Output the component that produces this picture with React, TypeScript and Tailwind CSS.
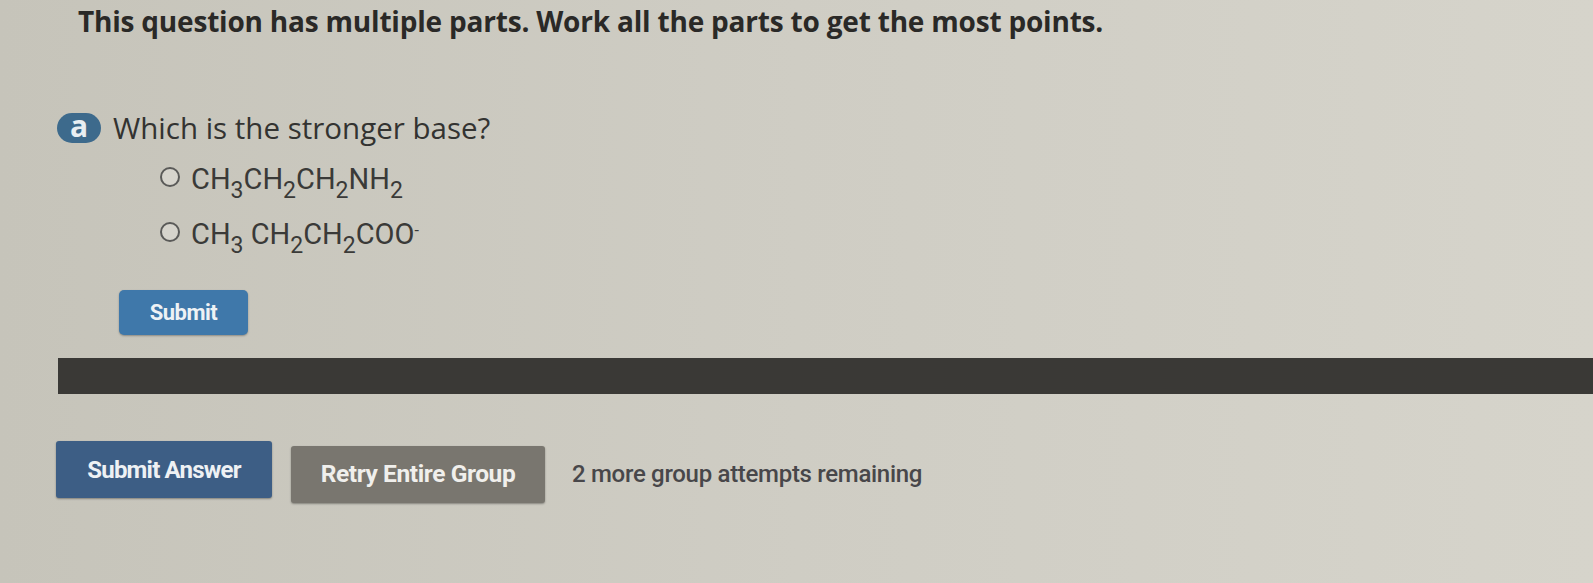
import React from "react";

function Radio() {
  return (
    <span className="inline-block w-[20px] h-[20px] rounded-full border-2 border-[#5a5a58] bg-[#d6d4cc] mr-[11px] shrink-0" />
  );
}

function S({ c }: { c: string }) {
  return <sub className="text-[23px] -bottom-[0.38em]">{c}</sub>;
}

export default function App() {
  return (
    <div className="w-[1593px] h-[583px] overflow-hidden bg-gradient-to-r from-[#c6c4ba] via-[#cfcdc4] to-[#d6d4cb] relative">
      <div className="pl-[78px] pt-[2px] h-[40px]">
        <h1 className="font-['Open_Sans',sans-serif] font-bold text-[28px] leading-[38px] text-[#2a2927] tracking-[-0.2px] whitespace-nowrap">
          This question has multiple parts. Work all the parts to get the most points.
        </h1>
      </div>

      <div className="pl-[57px] pt-[71px] flex items-center">
        <span className="w-[44px] h-[30px] rounded-full bg-[#3d6a8c] flex items-center justify-center text-[#e8eef2] font-['Open_Sans',sans-serif] font-bold text-[30px] leading-none pb-[5px]">
          a
        </span>
        <span className="ml-[12px] font-['Open_Sans',sans-serif] text-[29.5px] leading-[34px] text-[#333331]">
          Which is the stronger base?
        </span>
      </div>

      <div className="pl-[160px] pt-[14px] font-['Roboto',sans-serif] text-[29px] text-[#3a3a38] leading-[30px]">
        <div className="flex items-center h-[36px]">
          <Radio />
          <span className="pt-[4px]">
            CH<S c="3" />CH<S c="2" />CH<S c="2" />NH<S c="2" />
          </span>
        </div>
        <div className="flex items-center h-[36px] mt-[19px]">
          <Radio />
          <span className="pt-[4px]">
            CH<S c="3" /> CH<S c="2" />CH<S c="2" />COO<sup className="text-[16px]">-</sup>
          </span>
        </div>
      </div>

      <div className="pl-[119px] pt-[40px]">
        <button className="w-[129px] h-[45px] rounded-[5px] bg-[#3f78aa] text-[#eef2f5] font-['Roboto',sans-serif] font-bold text-[22px] tracking-[-0.5px] shadow-[0_1px_2px_rgba(0,0,0,0.3)]">
          Submit
        </button>
      </div>

      <div className="ml-[58px] mt-[23px] h-[36px] bg-[#3a3936]" />

      <div className="pl-[56px] pt-[47px] flex items-start">
        <button className="w-[216px] h-[57px] rounded-[3px] bg-[#3d5e85] text-[#eef1f4] font-['Roboto',sans-serif] font-bold text-[24px] tracking-[-0.8px] shadow-[0_1px_2px_rgba(0,0,0,0.35)]">
          Submit Answer
        </button>
        <button className="ml-[19px] mt-[5px] w-[254px] h-[57px] rounded-[3px] bg-[#79766f] text-[#f0efec] font-['Roboto',sans-serif] font-bold text-[24.5px] tracking-[-0.4px] shadow-[0_1px_2px_rgba(0,0,0,0.35)]">
          Retry Entire Group
        </button>
        <span className="ml-[27px] mt-[18px] font-['Roboto',sans-serif] font-medium text-[24px] leading-[30px] text-[#48474a] tracking-[-0.3px] whitespace-nowrap">
          2 more group attempts remaining
        </span>
      </div>
    </div>
  );
}
